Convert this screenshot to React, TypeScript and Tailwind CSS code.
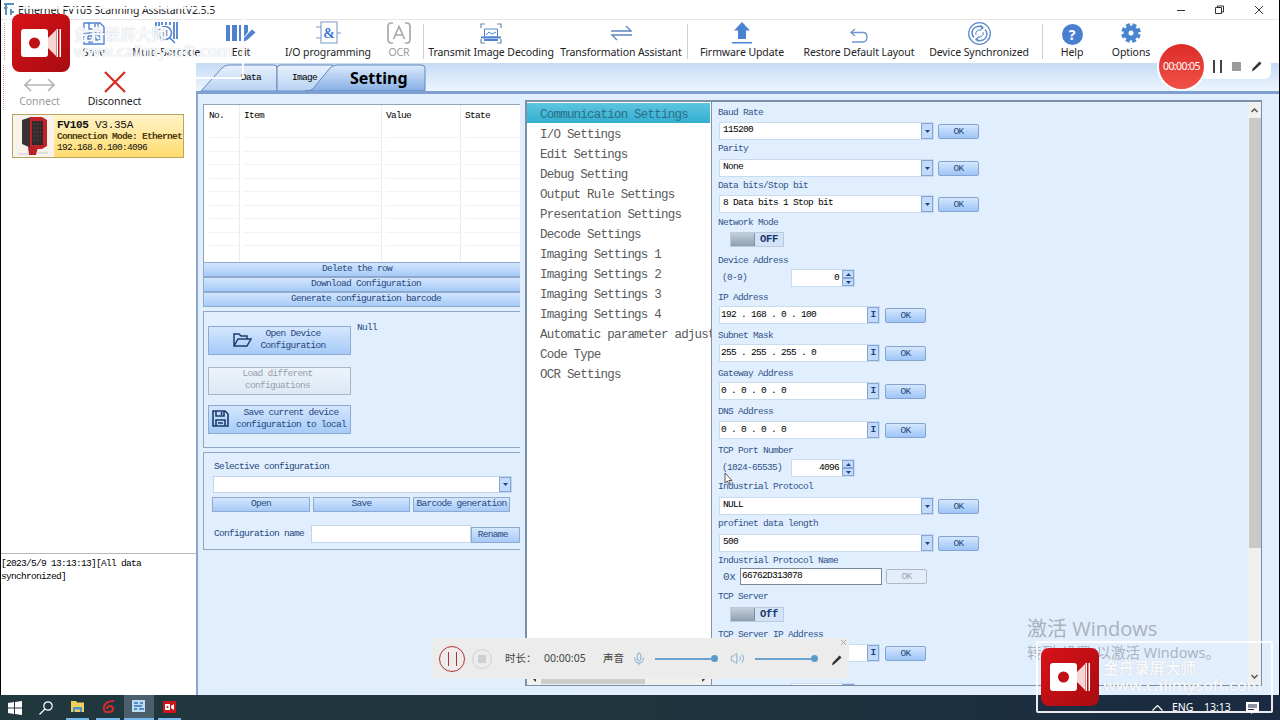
import type { ReactNode } from "react";
import clsx from "clsx";
import { Mic, Volume2 } from "lucide-react";

const MONO = "font-['Liberation_Mono','Noto_Sans_CJK_SC',monospace]";
const SMALL = "text-[9.5px] tracking-[-0.7px] leading-[12px] whitespace-pre";

/* ---------- Toolbar ---------- */

const BLUE = "#4f82d0";

const SaveIcon = () => (
  <svg width="22" height="23" viewBox="0 0 22 23" fill="none" stroke={BLUE} strokeWidth="1.4">
    <path d="M1 1h16l4 4v17H1z" />
    <path d="M6 1v6h9V1M12 2v3M1 11h20M5 14v3h4v-3zM13 14h4v4h-4zM5 20h5" />
  </svg>
);

const MultiIcon = () => (
  <svg width="24" height="24" viewBox="0 0 24 24" fill="none" stroke={BLUE}>
    <path d="M2 1v13M5 1v4M8 1v3M12 1v3M16 1v3M20 1v17M23 1v17" strokeWidth="1.8" />
    <circle cx="11" cy="12" r="6.5" strokeWidth="1.5" />
    <path d="M9 9v6M12.500 9v6M16 17l5 5" strokeWidth="1.6" />
  </svg>
);

const EditIcon = () => (
  <svg width="31" height="20" viewBox="0 0 31 20" fill={BLUE}>
    <path d="M0 2h4v16H0zM6 2h5v16H6zM13 2h2v16h-2zM18 2h4v7l-4 5z" />
    <path d="M26 6l4 3.500-9 8-4.500 2 1.500-5z" stroke="#fff" strokeWidth="0.7" />
  </svg>
);

const IoIcon = () => (
  <svg width="25" height="24" viewBox="0 0 25 24" fill="none" stroke="#7d9cc8" strokeWidth="1.1">
    <path d="M5 1h16v21H5zM0 6h5M0 17h5M21 12h4" />
    <text x="13" y="17" textAnchor="middle" fontSize="14" fontWeight="bold" fontFamily="Liberation Serif" fill="#3d77cf" stroke="none">
      &amp;
    </text>
  </svg>
);

const OcrIcon = () => (
  <svg width="24" height="22" viewBox="0 0 24 22" fill="none" stroke="#a9a9a9" strokeWidth="1.7">
    <path d="M6 1H4Q1 1 1 5v12q0 4 3 4h2M18 1h2q3 0 3 4v12q0 4-3 4h-2" />
    <path d="M6.500 17L12 4.500 17.500 17M8.500 13h7" />
  </svg>
);

const TransmitIcon = () => (
  <svg width="22" height="21" viewBox="0 0 22 21" fill="none" stroke="#6f87a8" strokeWidth="1.2">
    <path d="M1 5V1h4M17 1h4v4M21 16v4h-4M5 20H1v-4" />
    <path d="M4.500 6h13v8h-13zM6 12l3-3 3 2 4-2" stroke={BLUE} strokeWidth="1" />
    <path d="M1 14.500h20M4 17h14" stroke={BLUE} strokeWidth="1.900" />
  </svg>
);

const TransformIcon = () => (
  <svg width="21" height="16" viewBox="0 0 21 16" fill="none" stroke="#5d86bd" strokeWidth="1.300">
    <path d="M0 6h20l-5-5M21 10H1l5 5" />
  </svg>
);

const FirmwareIcon = () => (
  <svg width="20" height="22" viewBox="0 0 20 22" fill="#4b83d3">
    <path d="M10 0l8 8.500h-4V17H6V8.500H2zM0 20h20v1.400H0z" />
  </svg>
);

const RestoreIcon = () => (
  <svg className="mt-[6px]" width="18" height="16" viewBox="0 0 18 16" fill="none" stroke="#6f95ce" strokeWidth="1.4">
    <path d="M5 1L1 4.500 5 8M1 4.500h12q4 0 4 4.500t-4 5H2" />
  </svg>
);

const SyncIcon = () => (
  <svg width="23" height="23" viewBox="0 0 23 23" fill="none" stroke="#5a8ac8" strokeWidth="1.3">
    <circle cx="11.500" cy="11.500" r="10.800" />
    <path d="M6 15.500a6.500 6.500 0 0 1 8.500-9.800M17 7.500a6.500 6.500 0 0 1-8.500 9.800" strokeWidth="1.5" />
    <path d="M8 13a3.800 3.800 0 0 1 5-4.800M15 10a3.800 3.800 0 0 1-5 4.800" strokeWidth="1" />
    <path d="M12.500 3.500l2.500 2.300-2.500 2M10.500 19.500L8 17.200l2.500-2" />
  </svg>
);

const HelpIcon = () => (
  <div className="mt-[2px] w-[21px] h-[21px] rounded-full bg-[#4a7fd0] text-white text-[14px] leading-[21px] font-bold text-center">?</div>
);

const OptionsIcon = () => (
  <svg width="20" height="20" viewBox="0 0 20 20">
    <circle cx="10" cy="10" r="5" fill="none" stroke="#4a85cf" strokeWidth="5" />
    <circle cx="10" cy="10" r="8.300" fill="none" stroke="#4a85cf" strokeWidth="3" strokeDasharray="3.900 2.619" strokeDashoffset="-1.300" />
  </svg>
);

type Tool = { label: string; width: string; icon: ReactNode; dim?: boolean };

const FILE_TOOLS: Tool[] = [
  { label: "Save", width: "w-[48px]", icon: <SaveIcon /> },
  { label: "Multi-Barcode", width: "w-[96px]", icon: <MultiIcon /> },
  { label: "Edit", width: "w-[54px]", icon: <EditIcon /> },
  { label: "I/O programming", width: "w-[120px]", icon: <IoIcon /> },
  { label: "OCR", width: "w-[22px]", icon: <OcrIcon />, dim: true },
];
const IMAGE_TOOLS: Tool[] = [
  { label: "Transmit Image Decoding", width: "w-[134px]", icon: <TransmitIcon /> },
  { label: "Transformation Assistant", width: "w-[126px]", icon: <TransformIcon /> },
];
const DEVICE_TOOLS: Tool[] = [
  { label: "Firmware Update", width: "w-[108px]", icon: <FirmwareIcon /> },
  { label: "Restore Default Layout", width: "w-[126px]", icon: <RestoreIcon /> },
  { label: "Device Synchronized", width: "w-[114px]", icon: <SyncIcon /> },
];
const HELP_TOOLS: Tool[] = [
  { label: "Help", width: "w-[58px]", icon: <HelpIcon /> },
  { label: "Options", width: "w-[60px]", icon: <OptionsIcon /> },
];

const ToolGroup = ({ tools }: { tools: Tool[] }) => (
  <div className="flex">
    {tools.map((t) => (
      <div key={t.label} className={clsx("flex flex-col items-center shrink-0", t.width)}>
        <div className="h-[26px] flex items-center justify-center">{t.icon}</div>
        <span className={clsx("text-[10.5px] tracking-[-0.08px] leading-[13px] whitespace-nowrap", t.dim ? "text-[#9b9b9b]" : "text-[#222]")}>
          {t.label}
        </span>
      </div>
    ))}
  </div>
);

const Separator = () => <div className="w-px h-[35px] mt-1 bg-[#cfcfcf]" />;

const TitleBar = () => (
  <div className="h-5 shrink-0 flex items-center bg-white border-b border-[#e6e6e6] pl-[2px] pr-[15px]">
    <svg width="12" height="13" viewBox="0 0 12 13" fill="none" stroke="#5790bf" strokeWidth="2">
      <path d="M1 1h10M1 5h4M3 1v11M7 5h5M8 5v7M8 9h3" />
    </svg>
    <span className="ml-[3px] text-[10.5px] tracking-[-0.08px] text-[#222] leading-5">Ethernet FV105 Scanning AssistantV2.5.5</span>
    <svg className="ml-auto" width="88" height="10" viewBox="0 0 88 10" fill="none" stroke="#333" strokeWidth="1">
      <path d="M1 5.500h8M39.500 2.500h6v6h-6zM41.500 2.500v-1.500h6v6h-1.500M79 1l8 8M87 1l-8 8" />
    </svg>
  </div>
);

const Toolbar = () => (
  <div className="h-[43px] shrink-0 flex bg-white">
    <div className="w-[3px] ml-[1px] my-[3px] border-r border-dotted border-[#d59a9a]" />
    <div className="w-[65px]" />
    <ToolGroup tools={FILE_TOOLS} />
    <div className="w-[13px]" />
    <Separator />
    <ToolGroup tools={IMAGE_TOOLS} />
    <div className="w-[3px]" />
    <Separator />
    <ToolGroup tools={DEVICE_TOOLS} />
    <div className="w-[6px]" />
    <Separator />
    <ToolGroup tools={HELP_TOOLS} />
  </div>
);

/* ---------- Left dock ---------- */

const Scanner = () => (
  <svg width="40" height="40" viewBox="0 0 40 40">
    <path d="M8 4l9-3v31l-9-4z" fill="#3b3234" />
    <path d="M16 1h12l5 3v26l-5 3H16z" fill="#c12329" />
    <path d="M18 5h11v24H18z" fill="#332a2c" />
    <path d="M20 8h7M20 12h7M20 16h7M20 20h7M20 24h6" stroke="#6b4b4e" strokeDasharray="1.5 1.500" />
    <path d="M14 31h10l-2 8h-7z" fill="#b52227" />
    <path d="M4 38h10M24 37h10" stroke="#ccc" />
  </svg>
);

const LeftDock = () => (
  <div className="w-[195px] shrink-0 flex flex-col bg-white">
    <div className="flex h-[51px]">
      <div className="w-[3px] border-r border-dotted border-[#d59a9a] h-[45px] mt-[2px]" />
      <div className="w-[71px] flex flex-col items-center">
        <svg className="mt-[15px]" width="31" height="14" viewBox="0 0 31 14" fill="none" stroke="#b4b4b4" strokeWidth="1.6">
          <path d="M1 7h29M7 1L1 7l6 6M24 1l6 6-6 6" />
        </svg>
        <span className="mt-[3px] text-[10.5px] leading-[13px] text-[#999]">Connect</span>
      </div>
      <div className="w-[79px] flex flex-col items-center">
        <svg className="relative z-10 mt-[8px]" width="22" height="22" viewBox="0 0 22 22" stroke="#d62a1f" strokeWidth="2.200">
          <path d="M1 1l20 20M21 1L1 21" />
        </svg>
        <span className="mt-[2px] text-[10.5px] tracking-[-0.1px] leading-[13px] text-[#222]">Disconnect</span>
      </div>
    </div>
    <div className="ml-[11px] w-[172px] h-[44px] flex items-center border border-[#bba55e] bg-linear-to-b from-[#fff3c6] to-[#ffdc6c]">
      <div className="w-[41px] h-[42px] bg-[#f7f3ec] flex items-center justify-center">
        <Scanner />
      </div>
      <div className={clsx(MONO, "pl-[3px] text-[#111]")}>
        <div className="text-[11px] tracking-[-0.270px] leading-[11px] whitespace-pre">
          <b>FV105</b> V3.35A
        </div>
        <div className={clsx(SMALL, "h-[11px] font-bold text-[#4a3a10]")}>Connection Mode: Ethernet</div>
        <div className={clsx(SMALL, "h-[11px]")}>192.168.0.100:4096</div>
      </div>
    </div>
    <div className="grow" />
    <div className={clsx(MONO, "h-[142px] border-t border-[#b9b9b9] pt-[3px] text-[9.5px] tracking-[-0.7px] leading-[13px] text-black whitespace-pre")}>
      {"[2023/5/9 13:13:13][All data\nsynchronized]"}
    </div>
  </div>
);

/* ---------- Tabs ---------- */

const Tabs = () => (
  <div className="relative h-[31px] shrink-0 bg-linear-to-b from-[#c6dbf5] to-[#edf5ff] border-b-[3px] border-[#7d9fd2]">
    <svg className="absolute left-0 top-0" width="240" height="28" viewBox="0 0 240 28">
      <defs>
        <linearGradient id="idle" x1="0" x2="0" y1="0" y2="1">
          <stop offset="0" stopColor="#e9f2fd" />
          <stop offset="1" stopColor="#b7d2f3" />
        </linearGradient>
        <linearGradient id="active" x1="0" x2="0" y1="0" y2="1">
          <stop offset="0" stopColor="#dcebfc" />
          <stop offset="1" stopColor="#86aee3" />
        </linearGradient>
      </defs>
      <path d="M5 28L26 5q3-3 7-3h45q3 0 3 3v23z" fill="url(#idle)" stroke="#6488bb" />
      <path d="M81 28V5q0-3 4-3h52v26z" fill="url(#idle)" stroke="#6488bb" />
      <path d="M109 28q8 0 11-6L134 5q3-3 7-3h84q4 0 4 3v23z" fill="url(#active)" stroke="#6488bb" />
    </svg>
    <div className="relative flex h-[28px] pt-[2px] items-center">
      <span className={clsx(MONO, SMALL, "w-[81px] pl-[45px] text-black")}>Data</span>
      <span className={clsx(MONO, SMALL, "w-[54px] pl-[15px] text-black")}>Image</span>
      <span className="pl-[19px] text-[16px] font-bold text-black leading-6">Setting</span>
    </div>
  </div>
);

/* ---------- Configuration column ---------- */

const BTN = "border border-[#8fa9cf] bg-linear-to-b from-[#d4e6fd] to-[#a6caf8] text-[#26487c]";
const BTN_OFF = "border border-[#a9b6c4] bg-linear-to-b from-[#edf3fa] to-[#dde8f5] text-[#96a0ac]";

const Grid = () => (
  <div className="h-[158px] border-t border-l border-[#8fa3bb] bg-white flex text-black">
    {[
      ["No.", "w-[36px] pl-[5px]"],
      ["Item", "w-[142px] pl-[4px]"],
      ["Value", "w-[79px] pl-[4px]"],
      ["State", "w-[60px] pl-[4px]"],
    ].map(([name, cls]) => (
      <div key={name} className={clsx("shrink-0 border-r border-[#ececec] pt-[5px]", cls)}>
        <div className="h-[27px]">{name}</div>
        {Array.from({ length: 9 }, (_, i) => (
          <div key={i} className="h-[13.500px] border-t border-[#f2f2f2]" />
        ))}
      </div>
    ))}
  </div>
);

const Arrow = ({ up }: { up?: boolean }) => (
  <svg width="5" height="3" viewBox="0 0 5 3" fill="#1d4480">
    <path d={up ? "M0 3h5L2.500 0z" : "M0 0h5L2.500 3z"} />
  </svg>
);

const DropButton = () => (
  <div className="w-[12px] self-stretch shrink-0 flex items-center justify-center border border-[#86a5d3] bg-[#c3dbfa]">
    <Arrow />
  </div>
);

const ConfigColumn = () => (
  <div className={clsx(MONO, SMALL, "w-[317px] shrink-0 pt-[10px] overflow-hidden text-[#26487c]")}>
    <Grid />
    {["Delete the row", "Download Configuration", "Generate configuration barcode"].map((t, i) => (
      <div key={t} className={clsx(BTN, "h-[15px] border-r-0 border-[#7f99be] flex items-center pb-[2px]", ["pl-[118px]", "pl-[107px]", "pl-[87px]"][i])}>
        {t}
      </div>
    ))}
    <div className="mt-[4px] h-[137px] border border-r-0 border-[#8ea7c4] flex pt-[14px] pl-[4px]">
      <div className="w-[143px]">
        <div className={clsx(BTN, "h-[29px] flex items-center pb-[2px] pl-[24px] leading-[12px]")}>
          <svg width="19" height="16" viewBox="0 0 19 16" fill="none" stroke="#1c3c6e" strokeWidth="1.500">
            <path d="M1 14V2h5l2 2h6v3M1 14l4-7h13l-4 7z" />
          </svg>
          <span className="w-[82px] text-center">{"Open Device\nConfiguration"}</span>
        </div>
        <div className={clsx(BTN_OFF, "mt-[12px] h-[28px] flex items-center pb-[2px] pr-[4px] justify-center text-center")}>
          {"Load different\nconfiguations"}
        </div>
        <div className={clsx(BTN, "mt-[10px] h-[29px] flex items-center pb-[2px] pl-[3px]")}>
          <svg width="17" height="17" viewBox="0 0 17 17" fill="none" stroke="#1c3c6e" strokeWidth="1.600">
            <path d="M1 1h12l3 3v12H1zM4 1v5h8V1M4 16v-6h9v6M6 13h5M9.500 2v3" />
          </svg>
          <span className="ml-[7px] text-center">{"Save current device\nconfiguration to local"}</span>
        </div>
      </div>
      <span className="ml-[6px] mt-[-4px]">Null</span>
    </div>
    <div className="mt-[4px] h-[98px] border border-r-0 border-[#8ea7c4] pt-[8px] pl-[8px]">
      <div className="pl-[2px]">Selective configuration</div>
      <div className="mt-[3px] ml-px w-[299px] h-[17px] flex bg-white border border-[#c3d5ea]">
        <div className="grow" />
        <DropButton />
      </div>
      <div className="mt-[4px] flex gap-[3px] text-center">
        <div className={clsx(BTN, "w-[98px] h-[15px] leading-[12px]")}>Open</div>
        <div className={clsx(BTN, "w-[97px] h-[15px] leading-[12px]")}>Save</div>
        <div className={clsx(BTN, "w-[97px] h-[15px] leading-[12px]")}>Barcode generation</div>
      </div>
      <div className="mt-[13px] flex items-center">
        <span className="w-[101px] pl-[2px]">Configuration name</span>
        <div className="w-[162px] h-[18px] bg-white border border-[#c3d5ea]" />
        <div className={clsx(BTN, "mt-px w-[50px] h-[16px] leading-[14px] pl-[6px]")}>Rename</div>
      </div>
    </div>
  </div>
);

/* ---------- Settings menu ---------- */

const MENU = [
  "Communication Settings",
  "I/O Settings",
  "Edit Settings",
  "Debug Setting",
  "Output Rule Settings",
  "Presentation Settings",
  "Decode Settings",
  "Imaging Settings 1",
  "Imaging Settings 2",
  "Imaging Settings 3",
  "Imaging Settings 4",
  "Automatic parameter adjust",
  "Code Type",
  "OCR Settings",
];

const SettingsMenu = () => (
  <div className={clsx(MONO, "w-[185px] shrink-0 flex flex-col bg-white border-r border-[#7f92a8] pt-[1px] overflow-hidden")}>
    {MENU.map((m, i) => (
      <div
        key={m}
        className={clsx(
          "h-5 mr-[1px] pl-[13px] leading-[24px] text-[12.500px] tracking-[-0.780px] whitespace-pre",
          i === 0 ? "bg-linear-to-b from-[#5cc5e0] to-[#31aed0] text-[#2a6f88]" : "text-[#5a5a5a]"
        )}
      >
        {m}
      </div>
    ))}
    <div className="mt-auto h-[12px] bg-[#f0f0f0] flex items-center justify-between px-[6px]">
      <svg width="3" height="5" viewBox="0 0 3 5" fill="#444"><path d="M3 0v5L0 2.500z" /></svg>
      <div className="w-[104px] h-[10px] mr-auto ml-[5px] bg-[#cdcdcd]" />
      <svg width="3" height="5" viewBox="0 0 3 5" fill="#444"><path d="M0 0v5l3-2.500z" /></svg>
    </div>
  </div>
);

/* ---------- Settings form ---------- */

const Ok = ({ off }: { off?: boolean }) => (
  <div
    className={clsx(
      "w-[41px] h-[15px] rounded-[2px] border text-center leading-[13px]",
      off
        ? "border-[#adb9c7] bg-[#e4eefa] text-[#9aa5b3]"
        : "border-[#87a4cf] bg-linear-to-b from-[#d5e7fd] to-[#9dc5f7] text-[#26487c]"
    )}
  >
    OK
  </div>
);

const Combo = ({ value }: { value: string }) => (
  <div className="flex items-center">
    <div className="w-[215px] h-[18px] ml-px flex bg-white border border-[#c9dbf0] pl-[3px] text-black">
      <span className="grow leading-[14px]">{value}</span>
      <DropButton />
    </div>
    <div className="ml-[4px] mt-[1px]"><Ok /></div>
  </div>
);

const Ip = ({ value }: { value: string }) => (
  <div className="flex items-center">
    <div className="w-[161px] h-[18px] ml-px flex bg-white border border-[#c9dbf0] pl-px text-black">
      <span className="grow leading-[15px]">{value}</span>
      <div className="w-[12px] bg-[#c3dbfa] border border-[#86a5d3] text-[#1d4480] font-bold text-center leading-[14px]">I</div>
    </div>
    <div className="ml-[5px] mt-[1px]"><Ok /></div>
  </div>
);

const Spin = ({ range, value }: { range: string; value: string }) => (
  <div className="flex items-center">
    <span className="w-[73px] pl-[4px]">{range}</span>
    <div className="w-[64px] h-[18px] flex bg-white border border-[#c9dbf0] text-black">
      <span className="grow text-right pr-[3px] leading-[16px]">{value}</span>
      <div className="w-[12px] flex flex-col">
        <div className="h-1/2 flex items-center justify-center bg-[#c3dbfa] border border-[#86a5d3]"><Arrow up /></div>
        <div className="h-1/2 flex items-center justify-center bg-[#c3dbfa] border border-[#86a5d3]"><Arrow /></div>
      </div>
    </div>
  </div>
);

const Toggle = ({ label }: { label: string }) => (
  <div className="ml-[12px] w-[54px] h-[15px] flex border border-[#b9cbe0] bg-[#d3e3f5]">
    <div className="w-[24px] bg-linear-to-b from-[#c3cfdb] to-[#8d9fb1] border-r border-[#7f91a5]" />
    <span className="pl-[5px] text-[10.500px] tracking-[-0.3px] font-bold text-[#17366e] leading-[13px]">{label}</span>
  </div>
);

const HexName = ({ value }: { value: string }) => (
  <div className="flex items-center">
    <span className="w-[22px] pl-[5px] text-[11px] tracking-[-0.400px] leading-[16px]">0x</span>
    <div className="w-[142px] h-[17px] bg-white border border-[#7a8794] pl-[1px] leading-[14px] text-black">{value}</div>
    <div className="ml-[4px]"><Ok off /></div>
  </div>
);

// h / gap keep the uneven row pitch of the native form
const FIELDS: { label: string; h: string; gap: string; control: ReactNode }[] = [
  { label: "Baud Rate", h: "h-[36px]", gap: "mt-[3px]", control: <Combo value="115200" /> },
  { label: "Parity", h: "h-[37px]", gap: "mt-[4px]", control: <Combo value="None" /> },
  { label: "Data bits/Stop bit", h: "h-[37px]", gap: "mt-[3px]", control: <Combo value="8 Data bits 1 Stop bit" /> },
  { label: "Network Mode", h: "h-[38px]", gap: "mt-[3px]", control: <Toggle label="OFF" /> },
  { label: "Device Address", h: "h-[37px]", gap: "mt-[2px]", control: <Spin range="(0-9)" value="0" /> },
  { label: "IP Address", h: "h-[38px]", gap: "mt-[2px]", control: <Ip value={"192 . 168 . 0 . 100"} /> },
  { label: "Subnet Mask", h: "h-[38px]", gap: "mt-[2px]", control: <Ip value={"255 . 255 . 255 . 0"} /> },
  { label: "Gateway Address", h: "h-[38px]", gap: "mt-[2px]", control: <Ip value={"0 . 0 . 0 . 0"} /> },
  { label: "DNS Address", h: "h-[39px]", gap: "mt-[3px]", control: <Ip value={"0 . 0 . 0 . 0"} /> },
  { label: "TCP Port Number", h: "h-[36px]", gap: "mt-[2px]", control: <Spin range="(1024-65535)" value="4096" /> },
  { label: "Industrial Protocol", h: "h-[37px]", gap: "mt-[4px]", control: <Combo value="NULL" /> },
  { label: "profinet data length", h: "h-[37px]", gap: "mt-[4px]", control: <Combo value="500" /> },
  { label: "Industrial Protocol Name", h: "h-[36px]", gap: "mt-[1px]", control: <HexName value="66762D313078" /> },
  { label: "TCP Server", h: "h-[38px]", gap: "mt-[4px]", control: <Toggle label="Off" /> },
  { label: "TCP Server IP Address", h: "h-[38px]", gap: "mt-[3px]", control: <Ip value="" /> },
  { label: "", h: "h-[38px]", gap: "mt-[4px]", control: <Spin range="" value="" /> },
];

const SettingsForm = () => (
  <div className={clsx(MONO, SMALL, "grow h-[583px] pt-[5px] pl-[6px] overflow-hidden text-[#32558a]")}>
    {FIELDS.map((f, i) => (
      <div key={i} className={f.h}>
        <div className="h-[12px]">{f.label}</div>
        <div className={f.gap}>{f.control}</div>
      </div>
    ))}
  </div>
);

const ScrollBar = () => (
  <div className="w-[13px] shrink-0 bg-[#f0f0f0] flex flex-col items-center justify-between py-[6px]">
    <svg width="7" height="5" viewBox="0 0 7 5" fill="none" stroke="#555" strokeWidth="1.500"><path d="M.5 4l3-3 3 3" /></svg>
    <div className="w-[12px] h-[430px] mt-[5px] mb-auto bg-[#c9c9c9]" />
    <svg width="7" height="5" viewBox="0 0 7 5" fill="none" stroke="#555" strokeWidth="1.500"><path d="M.5 1l3 3 3-3" /></svg>
  </div>
);

/* ---------- Overlays ---------- */

const CamLogo = () => (
  <div className="w-[58px] h-[58px] rounded-[8px] bg-linear-to-br from-[#d81219] to-[#a80c10] flex items-center justify-center">
    <svg width="42" height="30" viewBox="0 0 42 30">
      <rect x="1" y="1" width="27" height="28" rx="3" fill="#fff" />
      <circle cx="14.500" cy="15" r="5.500" fill="#bf1116" />
      <path d="M28 10l8-8v26l-8-8z" fill="#f8d5d5" />
      <path d="M36.500 1h1.500v28h-1.500zM39.500 1H41v28h-1.500z" fill="#fff" />
    </svg>
  </div>
);

const Watermark = ({ place }: { place: string }) => (
  <div className={clsx("absolute w-[237px] h-[72px] border-2 border-white/90 rounded-[2px] pt-[5px] pl-[3px] flex", place)}>
    <CamLogo />
    <div className="pl-[4px] pt-[11px] text-white/90 font-['Noto_Sans_CJK_SC',sans-serif] font-bold whitespace-nowrap [text-shadow:0_0_1px_#b5bfca]">
      <div className="text-[15.500px] leading-[17px]">金舟录屏大师</div>
      <div className="text-[16px] tracking-[-0.1px] leading-[18px] font-['Open_Sans'] font-semibold">www.callmysoft.com</div>
    </div>
  </div>
);

const Pencil = () => (
  <svg width="11" height="11" viewBox="0 0 11 11" fill="#333">
    <path d="M8.500.5l2 2-7 6.500-2.700 1.500 1-3z" />
  </svg>
);

const RecordPill = () => (
  <div className="absolute left-[1157px] top-[42px] flex items-center">
    <div className="relative z-10 w-[49px] h-[49px] rounded-full border-[2px] border-white bg-linear-to-b from-[#dd2a25] to-[#f0504a] text-white text-[10.5px] tracking-[-0.6px] leading-[45px] text-center">
      00:00:05
    </div>
    <div className="-ml-[8px] w-[73px] h-[25px] rounded-[7px] bg-white flex items-center pl-[15px]">
      <div className="w-[9px] h-[13px] border-x-2 border-[#444]" />
      <div className="ml-[10px] w-[9px] h-[9px] bg-[#9b9b9b]" />
      <div className="ml-[10px]"><Pencil /></div>
    </div>
  </div>
);

const Slider = () => (
  <div className="w-[63px] flex items-center">
    <div className="grow h-[2px] bg-[#6ba3cd]" />
    <div className="w-[7px] h-[7px] rounded-full bg-[#5b9bc9]" />
  </div>
);

const RecorderBar = () => (
  <div className="absolute left-[432px] top-[638px] w-[417px] h-[41px] bg-[#ececec] flex items-center text-[#444] text-[10.5px] font-['Noto_Sans','Noto_Sans_CJK_SC',sans-serif]">
    <div className="ml-[7px] w-[26px] h-[26px] rounded-full border-[1.500px] border-[#b62f35] flex items-center justify-center">
      <div className="w-[9px] h-[14px] border-x-[1.500px] border-[#b62f35]" />
    </div>
    <div className="ml-[7px] w-[20px] h-[20px] rounded-full border border-[#d2d2d2] flex items-center justify-center">
      <div className="w-[8px] h-[8px] bg-[#cfcfcf]" />
    </div>
    <span className="ml-[13px] w-[39px] whitespace-nowrap">时长：</span>
    <span className="w-[59px]">00:00:05</span>
    <span className="w-[29px] whitespace-nowrap">声音</span>
    <Mic size={14} strokeWidth={1.500} color="#77a9cf" />
    <div className="ml-[9px]"><Slider /></div>
    <Volume2 className="ml-[12px]" size={15} strokeWidth={1.500} color="#77a9cf" />
    <div className="ml-[10px]"><Slider /></div>
    <div className="ml-[13px] mt-[4px]"><Pencil /></div>
    <svg className="absolute right-[3px] top-[2px]" width="5" height="5" viewBox="0 0 5 5" stroke="#aaa"><path d="M0 0l5 5M5 0L0 5" /></svg>
  </div>
);

const Cursor = () => (
  <svg className="absolute left-[724px] top-[472px]" width="9" height="13" viewBox="0 0 9 13" fill="#fff" stroke="#333" strokeWidth=".8">
    <path d="M1 1v10l2.300-2 1.500 3.500 1.500-.7-1.500-3.300H8z" />
  </svg>
);

const ActivateNotice = () => (
  <div className="absolute left-[1027px] top-[616px] text-[#a9b1bb] whitespace-nowrap font-['Open_Sans','Noto_Sans_CJK_SC',sans-serif]">
    <div className="text-[20px] leading-[26px]">激活 Windows</div>
    <div className="text-[14.500px] leading-[22px]">转到"设置"以激活 Windows。</div>
  </div>
);

/* ---------- Taskbar ---------- */

const Taskbar = () => (
  <div className="h-[25px] shrink-0 flex items-stretch bg-linear-to-r from-[#21383f] via-[#1f343d] to-[#1a2a42] text-white">
    <div className="w-[30px] flex items-center justify-center">
      <svg width="14" height="14" viewBox="0 0 14 14" fill="#fff"><path d="M0 2l6-1v5.600H0zM7 .9L14 0v6.600H7zM0 7.500h6V13l-6-1zM7 7.500h7V14l-7-1z" /></svg>
    </div>
    <div className="w-[31px] flex items-center justify-center">
      <svg width="14" height="14" viewBox="0 0 14 14" fill="none" stroke="#fff" strokeWidth="1.200"><circle cx="9" cy="5" r="4.200" /><path d="M6 8l-5.500 5.500" /></svg>
    </div>
    <div className="ml-[5px] w-[23px] flex items-center justify-center border-b-2 border-[#76b9ed]">
      <svg width="13" height="11" viewBox="0 0 13 11"><path d="M0 0h5l1 1.500h7V11H0z" fill="#f2cf58" /><path d="M2 6h9v5H9V8.500H4V11H2z" fill="#4c96c9" /></svg>
    </div>
    <div className="ml-[7px] w-[24px] flex items-center justify-center border-b-2 border-[#76b9ed]">
      <svg width="13" height="13" viewBox="0 0 13 13" fill="none" stroke="#d32a2a" strokeWidth="2"><path d="M12 1Q3 1 2 7t5 5q4 0 4-3T8 6 5 9" /></svg>
    </div>
    <div className="ml-[4px] w-[30px] flex items-center justify-center bg-[#4a5f69] border-b-2 border-[#76b9ed]">
      <svg width="14" height="13" viewBox="0 0 14 13"><path d="M0 0h13v12H0z" fill="#bcdcf5" /><path d="M2 3h4M8 3h3M2 6h8M2 9h3M7 9h5" stroke="#3673b5" strokeWidth="1.500" /></svg>
    </div>
    <div className="ml-[4px] w-[23px] flex items-center justify-center border-b-2 border-[#76b9ed]">
      <div className="w-[13px] h-[12px] bg-[#c9151b] flex items-center justify-center">
        <svg width="9" height="6" viewBox="0 0 9 6"><path d="M0 0h5v6H0zM6 2l3-2v6L6 4z" fill="#fff" /><circle cx="2.500" cy="3" r="1" fill="#c9151b" /></svg>
      </div>
    </div>
    <div className="ml-auto flex items-center pr-[21px] text-[10.5px]">
      <svg width="11" height="6" viewBox="0 0 11 6" fill="none" stroke="#fff" strokeWidth="1.200"><path d="M.5 5.500l5-5 5 5" /></svg>
      <span className="ml-[9px] w-[32px]">ENG</span>
      <span className="w-[42px]">13:13</span>
      <svg width="13" height="12" viewBox="0 0 13 12"><path d="M0 0h13v10H8l-3 2v-2H0z" fill="#fff" /><path d="M2 3h9M2 5h9M2 7.500h6" stroke="#1a2a42" /></svg>
    </div>
  </div>
);

export default function App() {
  return (
    <div className="relative w-[1280px] h-[720px] overflow-hidden flex flex-col bg-[#e1eefe] font-['Noto_Sans','Noto_Sans_CJK_SC',sans-serif]">
      <div className="h-[695px] flex flex-col border-l border-r border-black">
        <TitleBar />
        <Toolbar />
        <div className="grow flex min-h-0">
          <LeftDock />
          <div className="grow flex flex-col">
            <Tabs />
            <div className="grow flex border-l-2 border-[#8aa5c9] pl-[5px]">
              <ConfigColumn />
              <div className="ml-[5px] mt-[6px] w-[737px] h-[586px] border-2 border-[#7b8fa8] border-b-[1px] border-r-[1px] flex">
                <SettingsMenu />
                <SettingsForm />
                <ScrollBar />
              </div>
            </div>
          </div>
        </div>
      </div>
      <Taskbar />
      <ActivateNotice />
      <Cursor />
      <RecorderBar />
      <RecordPill />
      <Watermark place="left-[7px] top-[7px]" />
      <Watermark place="left-[1036px] top-[641px]" />
    </div>
  );
}
